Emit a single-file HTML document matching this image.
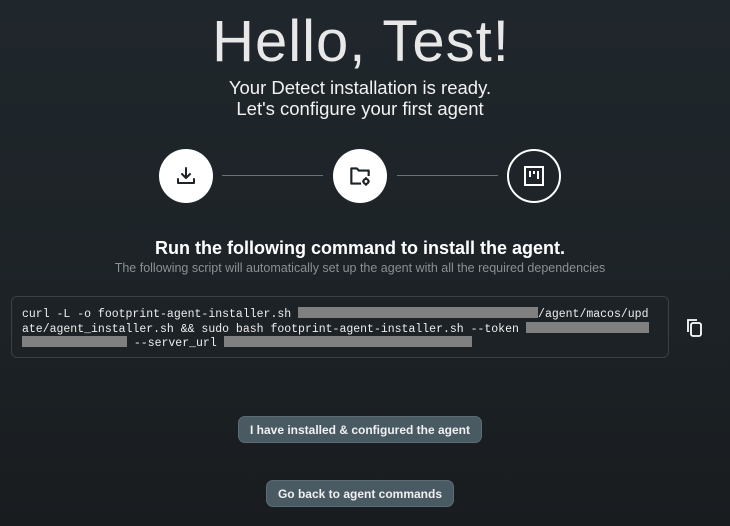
<!DOCTYPE html>
<html><head><style>
body{margin:0;width:730px;height:526px;overflow:hidden;background:linear-gradient(180deg,#20272c 0%,#1c2226 60%,#191c1f 100%);font-family:"Liberation Sans",sans-serif;color:#fff;position:relative}
.a{position:absolute}
.c{position:absolute;width:54px;height:54px;border-radius:50%;background:#fff;top:149px;display:flex;align-items:center;justify-content:center}
.l{position:absolute;top:175px;height:1px;background:#6b7175;width:101px}
.r{background:#808080;display:inline-block;height:11px;vertical-align:-1px}
.b{position:absolute;background:#4a5a63;border:1px solid #5d6c74;border-radius:7px;font-size:12px;font-weight:bold;color:#f0f0f0;text-align:center;box-sizing:border-box;line-height:27px}
</style></head><body>
<div class="a" style="top:8px;left:0;width:722px;text-align:center;font-size:58px;font-weight:300;color:#e8e8e8;letter-spacing:1px">Hello, Test!</div>
<div class="a" style="top:77px;left:0;width:720px;text-align:center;font-size:18.5px;line-height:21px;color:#f2f2f2">Your Detect installation is ready.<br>Let's configure your first agent</div>
<div class="c" style="left:159px"><svg width="24" height="24" viewBox="0 0 24 24" fill="none" stroke="#1d2327" stroke-width="2" stroke-linecap="round" stroke-linejoin="round"><path d="M12 4v10M8 10l4 4 4-4M4 15v4h16v-4"/></svg></div>
<div class="l" style="left:222px"></div>
<div class="c" style="left:333px"><svg width="26" height="26" viewBox="0 0 24 24" fill="none" stroke="#1d2327" stroke-width="2" stroke-linejoin="round"><path d="M13 19H4V5h5l2 2h9v5"/><circle cx="17.5" cy="17" r="2.3"/><path d="M17.5 13v1.5M17.5 19.5V21M14 17h1.2M19.8 17H21" stroke-width="1.6"/></svg></div>
<div class="l" style="left:397px"></div>
<div class="c" style="left:507px;background:transparent;border:2px solid #fff;box-sizing:border-box"><svg width="22" height="22" viewBox="0 0 22 22" fill="none" stroke="#fff" stroke-width="2"><rect x="2" y="2" width="18" height="18"/><path d="M7 6v6M11 6v3M15 6v8"/></svg></div>
<div class="a" style="top:238px;left:0;width:720px;text-align:center;font-size:18px;font-weight:bold">Run the following command to install the agent.</div>
<div class="a" style="top:261px;left:0;width:720px;text-align:center;font-size:12.5px;color:#8a9095">The following script will automatically set up the agent with all the required dependencies</div>
<div class="a" style="left:11px;top:296px;width:658px;height:62px;border:1px solid #394045;border-radius:6px;box-sizing:border-box;background:#1d2226"></div>
<div class="a" style="left:22px;top:307px;width:640px;font-family:'Liberation Mono',monospace;font-size:11.5px;line-height:13.5px;color:#eee;white-space:pre">curl -L -o footprint-agent-installer.sh <span class="r" style="width:240px"></span>/agent/macos/upd
ate/agent_installer.sh &amp;&amp; sudo bash footprint-agent-installer.sh --token <span class="r" style="width:123px"></span>
<span class="r" style="width:105px"></span> --server_url <span class="r" style="width:248px"></span></div>
<svg class="a" style="left:684px;top:317px" width="22" height="22" viewBox="0 0 22 22" fill="none" stroke="#fff" stroke-width="1.8"><path d="M4 15V3h9"/><rect x="7" y="6" width="10" height="13" rx="2"/></svg>
<div class="b" style="left:238px;top:416px;width:244px;height:27px">I have installed &amp; configured the agent</div>
<div class="b" style="left:266px;top:480px;width:188px;height:27px">Go back to agent commands</div>
</body></html>
